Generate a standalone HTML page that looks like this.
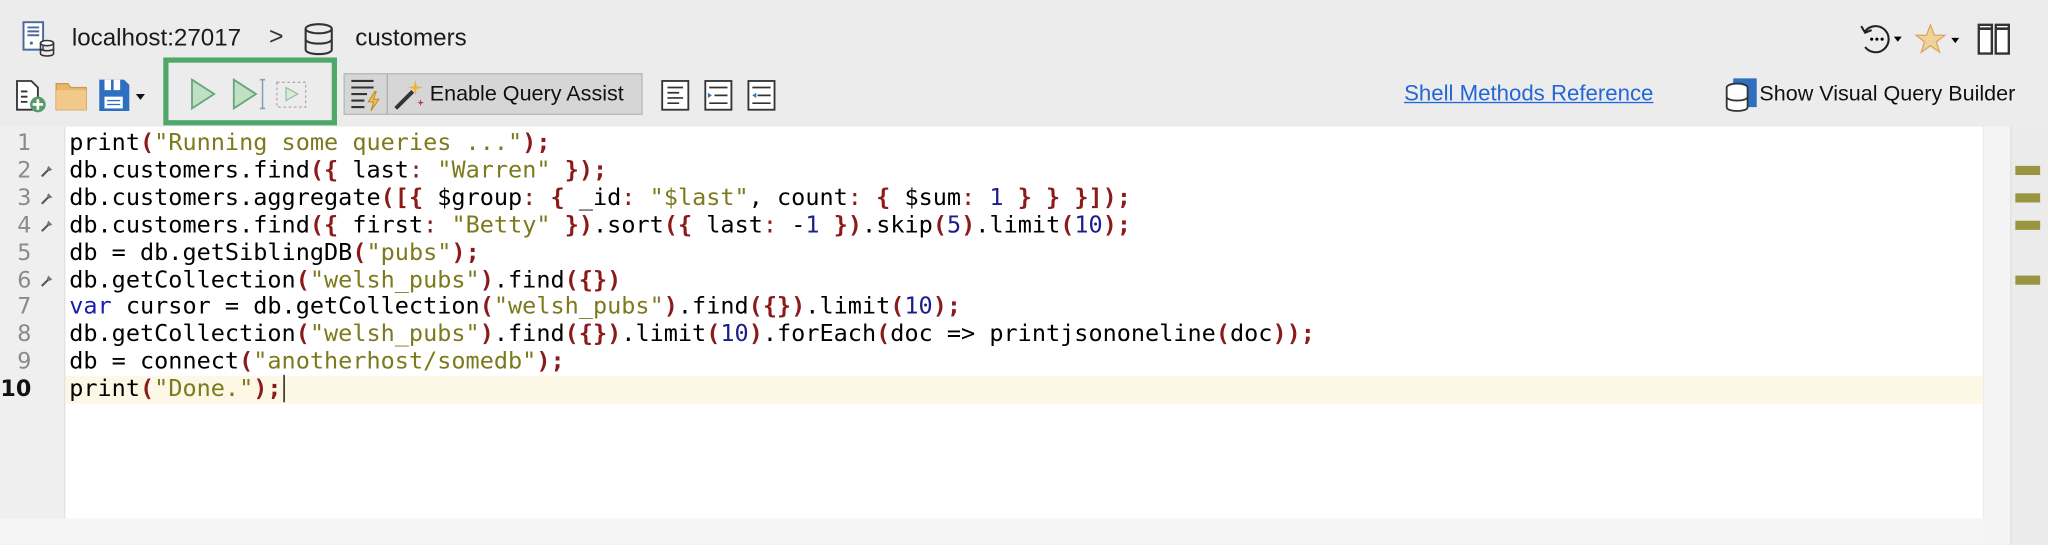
<!DOCTYPE html>
<html><head><meta charset="utf-8"><style>
html,body{margin:0;padding:0;width:2048px;height:544px;overflow:hidden;background:#ececec}
#w{position:absolute;left:0;top:0;width:1568px;height:417px;transform:scale(1.30612);transform-origin:0 0;font-family:"Liberation Sans",sans-serif;color:#1a1a1a}
.a{position:absolute}
.code{font-family:"DejaVu Sans Mono",monospace;font-size:18px;line-height:20.9px;white-space:pre}
.p{color:#8b1a1a;font-weight:bold}
.c{color:#8b1a1a}
.s{color:#7d7a1e}
.n{color:#1c1c8c}
.k{color:#1c1caa}
.ln{position:absolute;left:0;width:24px;text-align:right;color:#8a8a8a;font-family:"DejaVu Sans",sans-serif;font-size:17px;line-height:20.9px}
.pen{position:absolute;left:31px}
.mk{position:absolute;left:1543px;width:19px;height:7px;background:#9a9640}
</style></head><body><div id="w">
<svg class="a" style="left:16px;top:16px" width="28" height="28" viewBox="0 0 28 28"><rect x="2" y="1" width="15" height="21" fill="#fff" stroke="#4a6a9a" stroke-width="1.5"/><path d="M5 5h9M5 8h9M5 11h9" stroke="#4a6a9a" stroke-width="1.5"/><circle cx="8" cy="17" r="1.2" fill="#4a6a9a"/><ellipse cx="20" cy="17" rx="5" ry="2" fill="#fff" stroke="#333" stroke-width="1.2"/><path d="M15 17v8c0 2.5 10 2.5 10 0v-8M15 21c0 2.5 10 2.5 10 0" fill="none" stroke="#333" stroke-width="1.2"/></svg>
<div class="a" style="left:55px;top:18px;font-size:18.5px">localhost:27017</div>
<div class="a" style="left:206px;top:18px;font-size:19px;color:#333">&gt;</div>
<svg class="a" style="left:232px;top:17px" width="24" height="26" viewBox="0 0 24 26"><ellipse cx="12" cy="5" rx="10" ry="3.5" fill="none" stroke="#333" stroke-width="1.6"/><path d="M2 5v16c0 4.5 20 4.5 20 0V5M2 13c0 4.5 20 4.5 20 0" fill="none" stroke="#333" stroke-width="1.6"/></svg>
<div class="a" style="left:272px;top:18px;font-size:18.5px">customers</div>
<svg class="a" style="left:1422px;top:16px" width="36" height="28" viewBox="0 0 36 28"><path d="M6 8A10 10 0 1 1 6 20" fill="none" stroke="#222" stroke-width="1.6"/><path d="M3 4l3 5 5-2" fill="none" stroke="#222" stroke-width="1.6"/><circle cx="11" cy="14" r="1.2"/><circle cx="15" cy="14" r="1.2"/><circle cx="19" cy="14" r="1.2"/><path d="M28 12h6l-3 4z"/></svg>
<svg class="a" style="left:1466px;top:17px" width="36" height="26" viewBox="0 0 36 26"><path d="M12 2l3 8h8l-6.5 5 2.5 8-7-5-7 5 2.5-8L1 10h8z" fill="#f1d39a" stroke="#d9a660" stroke-width="1"/><path d="M28 12h6l-3 4z"/></svg>
<svg class="a" style="left:1513px;top:17px" width="28" height="26" viewBox="0 0 28 26"><rect x="2" y="2" width="10" height="22" fill="#fff" stroke="#333" stroke-width="1.8"/><rect x="15" y="2" width="10" height="22" fill="#fff" stroke="#333" stroke-width="1.8"/><path d="M2 5h10M15 5h10" stroke="#333" stroke-width="2"/></svg>
<svg class="a" style="left:10px;top:60px" width="28" height="28" viewBox="0 0 28 28"><path d="M3 2h11l5 5v17H3z" fill="#fff" stroke="#333" stroke-width="1.4"/><path d="M6 10h5M6 14h5M6 18h5" stroke="#333" stroke-width="1.4"/><circle cx="19" cy="20" r="6" fill="#5a9a6a"/><path d="M19 16v8M15 20h8" stroke="#fff" stroke-width="2"/></svg>
<svg class="a" style="left:41px;top:60px" width="28" height="26" viewBox="0 0 28 26"><path d="M2 4h9l2 3h12v17H2z" fill="#e8b86a" stroke="#c99a50"/><rect x="2" y="9" width="23" height="15" fill="#f2c98a"/></svg>
<svg class="a" style="left:74px;top:59px" width="40" height="28" viewBox="0 0 40 28"><path d="M2 2h19l4 4v20H2z" fill="#2f6fc0"/><rect x="6" y="2" width="5" height="8" fill="#fff"/><rect x="13" y="2" width="5" height="8" fill="#fff"/><rect x="6" y="15" width="14" height="9" fill="#fff"/><path d="M8 18h10M8 21h10" stroke="#2f6fc0"/><path d="M30 13h7l-3.5 4.5z" fill="#111"/></svg>
<div class="a" style="left:125px;top:44px;width:125px;height:44px;border:4px solid #4fa86a"></div>
<svg class="a" style="left:142px;top:58px" width="100" height="28" viewBox="0 0 100 28"><path d="M5 3l17 11L5 25z" fill="#bfe0c4" stroke="#6aa67a" stroke-width="1.4"/><path d="M37 3l17 11-17 11z" fill="#bfe0c4" stroke="#6aa67a" stroke-width="1.4"/><path d="M59 3v22M57 3h4M57 25h4" stroke="#8aa0b0" stroke-width="1.2"/><rect x="70" y="5" width="22" height="19" fill="none" stroke="#aaa" stroke-dasharray="2 2"/><path d="M77 9l9 5-9 5z" fill="#d8ecd8" stroke="#9ac0a0"/></svg>
<div class="a" style="left:263px;top:56px;width:229px;height:32px;background:#d6d6d6;border:1px solid #b8b8b8;box-sizing:border-box"></div>
<div class="a" style="left:296px;top:56px;width:1px;height:32px;background:#b0b0b0"></div>
<svg class="a" style="left:266px;top:58px" width="28" height="28" viewBox="0 0 28 28"><path d="M3 4h17M3 9h17M3 14h12M3 19h10M3 24h10" stroke="#333" stroke-width="1.6"/><path d="M21 12l-5 8h4l-2 7 6-9h-4l2-6z" fill="#f0c050" stroke="#c08a20" stroke-width=".8"/></svg>
<svg class="a" style="left:300px;top:58px" width="28" height="28" viewBox="0 0 28 28"><path d="M3 25L16 12" stroke="#333" stroke-width="3"/><path d="M18 3l1 5 5 1-5 1-1 5-1-5-5-1 5-1z" fill="#f0b030"/><path d="M22 18l.6 2 2 .6-2 .6-.6 2-.6-2-2-.6 2-.6z" fill="#c03050"/></svg>
<div class="a" style="left:329px;top:63px;font-size:16.5px;color:#111">Enable Query Assist</div>
<svg class="a" style="left:505px;top:60px" width="96" height="26" viewBox="0 0 96 26"><rect x="2" y="2" width="20" height="22" fill="#fff" stroke="#333" stroke-width="1.4"/><path d="M6 7h12M6 11h9M6 15h12M6 19h9" stroke="#333" stroke-width="1.3"/><rect x="35" y="2" width="20" height="22" fill="#fff" stroke="#333" stroke-width="1.4"/><path d="M38 7h14M42 13h10M38 19h14" stroke="#333" stroke-width="1.3"/><path d="M37 11l3 2-3 2z" fill="#2f6fc0"/><rect x="68" y="2" width="20" height="22" fill="#fff" stroke="#333" stroke-width="1.4"/><path d="M71 7h14M75 13h10M71 19h14" stroke="#333" stroke-width="1.3"/><path d="M74 11l-3 2 3 2z" fill="#2f6fc0"/></svg>
<div class="a" style="left:1075px;top:62px;font-size:17px;color:#2266d8;text-decoration:underline">Shell Methods Reference</div>
<svg class="a" style="left:1319px;top:58px" width="28" height="30" viewBox="0 0 28 30"><rect x="8" y="2" width="18" height="22" fill="#2f6fc0"/><ellipse cx="11" cy="9" rx="8" ry="3" fill="#fff" stroke="#333" stroke-width="1.4"/><path d="M3 9v15c0 4 16 4 16 0V9M3 16c0 4 16 4 16 0" fill="#fff" stroke="#333" stroke-width="1.4"/></svg>
<div class="a" style="left:1347px;top:63px;font-size:16.5px;color:#111">Show Visual Query Builder</div>
<div class="a" style="left:0;top:97px;width:1518px;height:300px;background:#fff;border-bottom:1px solid #ddd"></div>
<div class="a" style="left:0;top:97px;width:49px;height:320px;background:#efefef;border-right:1px solid #e2e2e2"></div>
<div class="a" style="left:1519px;top:97px;width:20px;height:320px;background:#f4f4f4"></div>
<div class="a" style="left:1539px;top:97px;width:27px;height:320px;background:#ebebeb;border-left:1px solid #e0e0e0"></div>
<div class="a" style="left:0;top:397px;width:1519px;height:20px;background:#f5f5f5"></div>
<div class="a" style="left:50px;top:288px;width:1468px;height:21px;background:#fdf7e6"></div>
<div class="mk" style="top:127px"></div><div class="mk" style="top:148px"></div><div class="mk" style="top:169px"></div><div class="mk" style="top:211px"></div>
<div class="a" style="left:0;top:100px">
<div class="ln" style="top:0">1</div><div class="ln" style="top:20.9px">2</div><div class="ln" style="top:41.8px">3</div><div class="ln" style="top:62.7px">4</div><div class="ln" style="top:83.6px">5</div><div class="ln" style="top:104.5px">6</div><div class="ln" style="top:125.4px">7</div><div class="ln" style="top:146.3px">8</div><div class="ln" style="top:167.2px">9</div><div class="ln" style="top:188.1px;color:#111;font-weight:bold">10</div>
<svg class="pen" style="top:26px" width="10" height="10" viewBox="0 0 10 10"><path d="M1 9L7 3" stroke="#555" stroke-width="1.6"/><path d="M6 1l3 3-2 1-2-2z" fill="#777"/></svg>
<svg class="pen" style="top:47px" width="10" height="10" viewBox="0 0 10 10"><path d="M1 9L7 3" stroke="#555" stroke-width="1.6"/><path d="M6 1l3 3-2 1-2-2z" fill="#777"/></svg>
<svg class="pen" style="top:68px" width="10" height="10" viewBox="0 0 10 10"><path d="M1 9L7 3" stroke="#555" stroke-width="1.6"/><path d="M6 1l3 3-2 1-2-2z" fill="#777"/></svg>
<svg class="pen" style="top:110px" width="10" height="10" viewBox="0 0 10 10"><path d="M1 9L7 3" stroke="#555" stroke-width="1.6"/><path d="M6 1l3 3-2 1-2-2z" fill="#777"/></svg>
</div>
<div class="a code" style="left:53px;top:100px;color:#000">print<span class="p">(</span><span class="s">"Running some queries ..."</span><span class="p">);</span>
db.customers.find<span class="p">({</span> last<span class="c">:</span> <span class="s">"Warren"</span> <span class="p">});</span>
db.customers.aggregate<span class="p">([{</span> $group<span class="c">:</span> <span class="p">{</span> _id<span class="c">:</span> <span class="s">"$last"</span>, count<span class="c">:</span> <span class="p">{</span> $sum<span class="c">:</span> <span class="n">1</span> <span class="p">}</span> <span class="p">}</span> <span class="p">}]);</span>
db.customers.find<span class="p">({</span> first<span class="c">:</span> <span class="s">"Betty"</span> <span class="p">})</span>.sort<span class="p">({</span> last<span class="c">:</span> -<span class="n">1</span> <span class="p">})</span>.skip<span class="p">(</span><span class="n">5</span><span class="p">)</span>.limit<span class="p">(</span><span class="n">10</span><span class="p">);</span>
db = db.getSiblingDB<span class="p">(</span><span class="s">"pubs"</span><span class="p">);</span>
db.getCollection<span class="p">(</span><span class="s">"welsh_pubs"</span><span class="p">)</span>.find<span class="p">({})</span>
<span class="k">var</span> cursor = db.getCollection<span class="p">(</span><span class="s">"welsh_pubs"</span><span class="p">)</span>.find<span class="p">({})</span>.limit<span class="p">(</span><span class="n">10</span><span class="p">);</span>
db.getCollection<span class="p">(</span><span class="s">"welsh_pubs"</span><span class="p">)</span>.find<span class="p">({})</span>.limit<span class="p">(</span><span class="n">10</span><span class="p">)</span>.forEach<span class="p">(</span>doc =&gt; printjsononeline<span class="p">(</span>doc<span class="p">));</span>
db = connect<span class="p">(</span><span class="s">"anotherhost/somedb"</span><span class="p">);</span>
print<span class="p">(</span><span class="s">"Done."</span><span class="p">);</span><span style="border-left:1.5px solid #000;margin-left:1px"></span></div>
</div></body></html>
